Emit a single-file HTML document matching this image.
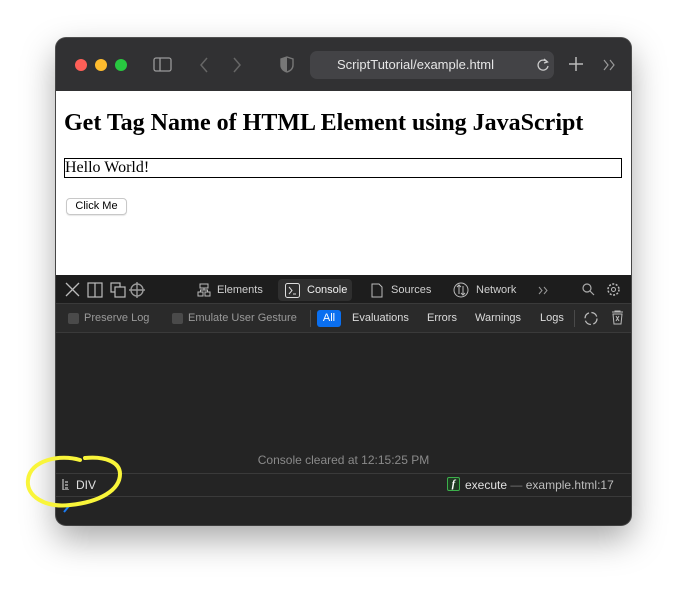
<!DOCTYPE html>
<html><head><meta charset="utf-8"><style>
*{margin:0;padding:0;box-sizing:border-box}
body{width:686px;height:599px;background:#fff;position:relative;overflow:hidden;font-family:"Liberation Sans",sans-serif}
.win{position:absolute;left:56px;top:38px;width:575px;height:487px;border-radius:10px;overflow:hidden;background:#242424;box-shadow:0 14px 34px rgba(0,0,0,.35),0 0 0 1px #555}
.a{position:absolute}
.tb{left:0;top:0;width:575px;height:53px;background:#313133}
.dot{width:12px;height:12px;border-radius:50%;top:21px}
.url{left:254px;top:13px;width:244px;height:28px;background:#434346;border-radius:7px;color:#e6e6e6;font-size:13px;line-height:28px;padding-left:27px}
.page{left:0;top:53px;width:575px;height:184px;background:#fff;font-family:"Liberation Serif",serif}
.tabs{left:0;top:237px;width:575px;height:29px;background:#1d1d1d;border-bottom:1px solid #3a3a3a}
.t{color:#d0d0d0;font-size:11px;top:246px}
.flt{left:0;top:266px;width:575px;height:29px;background:#2a2a2a;border-bottom:1px solid #3a3a3a}
.f{color:#dcdcdc;font-size:11px}
.cb{width:11px;height:11px;background:#4a4a4a;border-radius:2px}
svg{position:absolute}
</style></head><body>
<div class="win">
 <div class="a tb"></div>
 <div class="a dot" style="left:19px;background:#fe5f57"></div>
 <div class="a dot" style="left:39px;background:#febc2e"></div>
 <div class="a dot" style="left:59px;background:#28c840"></div>
 <svg style="left:97px;top:19px" width="20" height="16"><rect x="1" y="1" width="17" height="13" rx="2" fill="none" stroke="#9a9a9a" stroke-width="1.3"/><line x1="7" y1="1" x2="7" y2="14" stroke="#9a9a9a" stroke-width="1.3"/></svg>
 <svg style="left:142px;top:18px" width="50" height="18"><path d="M9 2 L3 9 L9 16" fill="none" stroke="#666" stroke-width="1.5"/><path d="M36 2 L42 9 L36 16" fill="none" stroke="#666" stroke-width="1.5"/></svg>
 <svg style="left:224px;top:18px" width="14" height="17"><path d="M7 1 L13 3 L13 9 Q13 14 7 16 Q1 14 1 9 L1 3 Z" fill="none" stroke="#777" stroke-width="1.4"/><path d="M7 1 L7 16 Q1 14 1 9 L1 3Z" fill="#777"/></svg>
 <div class="a url">ScriptTutorial/example.html</div>
 <svg style="left:480px;top:19px" width="14" height="15"><path d="M11 5 A5 5 0 1 0 12 9" fill="none" stroke="#ccc" stroke-width="1.3"/><path d="M8 2 L11.5 5 L8 6" fill="none" stroke="#ccc" stroke-width="1.3"/></svg>
 <svg style="left:512px;top:18px" width="16" height="16"><path d="M8 1V15M1 8H15" stroke="#bbb" stroke-width="1.5"/></svg>
 <svg style="left:546px;top:21px" width="14" height="12"><path d="M2 1L6 6L2 11M8 1L12 6L8 11" fill="none" stroke="#999" stroke-width="1.2"/></svg>
 <div class="a page">
  <div class="a" style="left:8px;top:19px;font-size:24px;font-weight:bold;color:#000;white-space:nowrap">Get Tag Name of HTML Element using JavaScript</div>
  <div class="a" style="left:8px;top:67px;width:558px;height:20px;border:1px solid #000;font-size:16px;line-height:18px;color:#000">Hello World!</div>
  <div class="a" style="left:10px;top:107px;width:61px;height:17px;border:1px solid #c8c8c8;border-radius:4px;font-family:'Liberation Sans',sans-serif;font-size:11px;text-align:center;line-height:15px;color:#000;box-shadow:0 1px 1px rgba(0,0,0,.1)">Click Me</div>
 </div>
 <div class="a tabs"></div>
 <svg style="left:9px;top:244px" width="80" height="17"><path d="M1 1L14 14M14 1L1 14" stroke="#bbb" stroke-width="1.3"/><rect x="23" y="1" width="14" height="14" fill="none" stroke="#bbb" stroke-width="1.2"/><line x1="30" y1="1" x2="30" y2="15" stroke="#bbb" stroke-width="1.2"/><rect x="46" y="1" width="9" height="9" fill="none" stroke="#bbb" stroke-width="1.2"/><rect x="50" y="5" width="10" height="10" fill="#1d1d1d" stroke="#bbb" stroke-width="1.2"/><circle cx="72" cy="8" r="6" fill="none" stroke="#999" stroke-width="1.4"/><path d="M72 0V16M64 8H80" stroke="#999" stroke-width="1.4"/></svg>
 <svg style="left:141px;top:245px" width="14" height="14"><rect x="3" y="1" width="8" height="4" fill="none" stroke="#bbb"/><rect x="1" y="9" width="5" height="4" fill="none" stroke="#bbb"/><rect x="8" y="9" width="5" height="4" fill="none" stroke="#bbb"/><path d="M7 5V7M3.5 9V7H10.5V9" fill="none" stroke="#bbb"/></svg>
 <div class="a t" style="left:161px">Elements</div>
 <div class="a" style="left:222px;top:241px;width:74px;height:22px;background:#2f2f2f;border-radius:4px"></div>
 <svg style="left:229px;top:245px" width="15" height="15"><rect x="0.5" y="0.5" width="14" height="14" rx="2" fill="none" stroke="#ddd"/><path d="M4 4L7 7.5L4 11M8 11H11" fill="none" stroke="#ddd"/></svg>
 <div class="a t" style="left:251px;color:#f0f0f0">Console</div>
 <svg style="left:315px;top:245px" width="12" height="15"><path d="M1 1H8L11 4V14H1Z" fill="none" stroke="#bbb"/></svg>
 <div class="a t" style="left:335px">Sources</div>
 <svg style="left:397px;top:244px" width="16" height="16"><circle cx="8" cy="8" r="7" fill="none" stroke="#bbb"/><path d="M6 3V12M4 5L6 3L8 5M10 4V13M8 11L10 13L12 11" fill="none" stroke="#bbb"/></svg>
 <div class="a t" style="left:420px">Network</div>
 <svg style="left:482px;top:248px" width="11" height="9"><path d="M1 1L4 4.5L1 8M6 1L9 4.5L6 8" fill="none" stroke="#999"/></svg>
 <svg style="left:526px;top:245px" width="13" height="13"><circle cx="5" cy="5" r="4" fill="none" stroke="#aaa" stroke-width="1.2"/><path d="M8 8L12 12" stroke="#aaa" stroke-width="1.2"/></svg>
 <svg style="left:550px;top:244px" width="15" height="15"><circle cx="7.5" cy="7.5" r="5.5" fill="none" stroke="#bbb" stroke-width="1.5" stroke-dasharray="2 1.5"/><circle cx="7.5" cy="7.5" r="2" fill="none" stroke="#bbb"/></svg>
 <div class="a flt"></div>
 <div class="a cb" style="left:12px;top:275px"></div>
 <div class="a f" style="left:28px;top:274px;color:#9a9a9a">Preserve Log</div>
 <div class="a cb" style="left:116px;top:275px"></div>
 <div class="a f" style="left:132px;top:274px;color:#9a9a9a">Emulate User Gesture</div>
 <div class="a" style="left:254px;top:272px;width:1px;height:17px;background:#4a4a4a"></div>
 <div class="a" style="left:261px;top:272px;width:24px;height:17px;background:#0a6ff0;border-radius:3px;color:#fff;font-size:11px;text-align:center;line-height:17px">All</div>
 <div class="a f" style="left:296px;top:274px">Evaluations</div>
 <div class="a f" style="left:371px;top:274px">Errors</div>
 <div class="a f" style="left:419px;top:274px">Warnings</div>
 <div class="a f" style="left:484px;top:274px">Logs</div>
 <div class="a" style="left:518px;top:272px;width:1px;height:17px;background:#4a4a4a"></div>
 <svg style="left:527px;top:272px" width="16" height="17"><circle cx="8" cy="8.5" r="6" fill="none" stroke="#bbb" stroke-width="1.3" stroke-dasharray="7 2.5"/></svg>
 <svg style="left:555px;top:272px" width="13" height="15"><path d="M1 2H12M4 2V1H9V2M2 4H11L10 14H3Z M5 6L8 11M8 6L5 11" fill="none" stroke="#bbb"/></svg>
 <div class="a" style="left:0;top:415px;width:575px;text-align:center;color:#8a8a8a;font-size:12px">Console cleared at 12:15:25 PM</div>
 <div class="a" style="left:0;top:435px;width:575px;height:1px;background:#3a3a3a"></div>
 <svg style="left:6px;top:441px" width="8" height="11"><path d="M1 0V11H7M3 3H6M3 6H6M3 9H6" fill="none" stroke="#aaa" stroke-width="1.4"/></svg>
 <div class="a" style="left:20px;top:440px;color:#e0e0e0;font-size:12px">DIV</div>
 <div class="a" style="left:391px;top:439px;width:13px;height:14px;border:1px solid #3cb04b;background:#1f3a22;border-radius:2px;color:#fff;font-size:11px;font-style:italic;font-family:'Liberation Serif',serif;text-align:center;line-height:12px;font-weight:bold">f</div>
 <div class="a" style="left:409px;top:440px;font-size:12px;color:#e0e0e0;white-space:nowrap">execute <span style="color:#777">—</span> <span style="color:#bdbdbd">example.html:17</span></div>
 <div class="a" style="left:0;top:458px;width:575px;height:1px;background:#3a3a3a"></div>
 <svg style="left:6px;top:467px" width="8" height="9"><path d="M7 1L2 7" stroke="#1a7cf5" stroke-width="2"/></svg>
</div>
<svg style="left:20px;top:452px" width="110" height="62"><path d="M60 8 C40 2 10 8 8 28 C6 44 25 56 50 53 C80 50 100 38 100 22 C100 10 85 4 65 6" fill="none" stroke="#f9f53a" stroke-width="4" stroke-linecap="round"/></svg>
</body></html>
